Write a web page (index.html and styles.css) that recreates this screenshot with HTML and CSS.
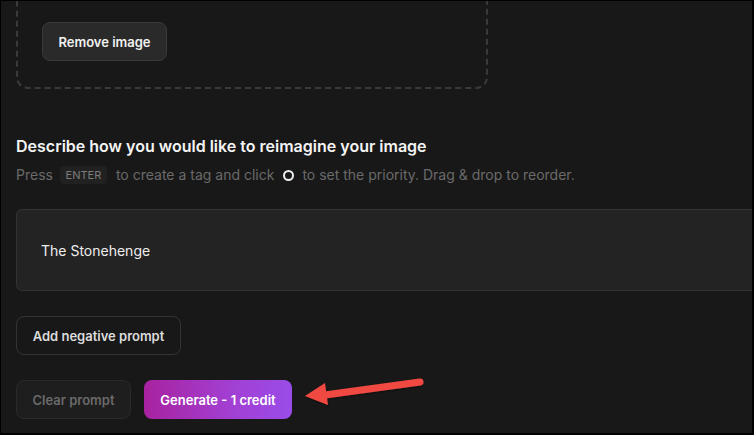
FILE: index.html
```html
<!DOCTYPE html>
<html>
<head>
<meta charset="utf-8">
<link rel="stylesheet" href="styles.css">
</head>
<body>
<div class="frame">
  <div class="content">
    <div class="dropzone">
      <button class="btn btn-dark">Remove image</button>
    </div>
    <h2 class="title">Describe how you would like to reimagine your image</h2>
    <p class="hint">Press <span class="kbd">ENTER</span> to create a tag and click <span class="ring"></span> to set the priority. Drag &amp; drop to reorder.</p>
    <div class="prompt">The Stonehenge</div>
    <div class="row">
      <button class="btn btn-outline">Add negative prompt</button>
    </div>
    <div class="row actions">
      <button class="btn btn-disabled">Clear prompt</button>
      <button class="btn btn-primary">Generate - 1 credit</button>
    </div>
  </div>
  <svg class="arrow" width="140" height="40" viewBox="0 0 140 40">
    <defs>
      <filter id="sh" x="-20%" y="-50%" width="140%" height="200%">
        <feDropShadow dx="0" dy="1" stdDeviation="1" flood-color="#000" flood-opacity="0.5"/>
      </filter>
    </defs>
    <g filter="url(#sh)">
      <line x1="120" y1="8" x2="25" y2="21" stroke="#f04a43" stroke-width="7" stroke-linecap="round"/>
      <polygon points="5,22 25,9 28,31" fill="#f04a43"/>
    </g>
  </svg>
</div>
</body>
</html>
```

FILE: styles.css
```css
html, body {
  margin: 0;
  padding: 0;
  background: #000;
}
.frame {
  position: relative;
  width: 754px;
  height: 435px;
  box-sizing: border-box;
  border-style: solid;
  border-color: #000;
  border-width: 1px 2px 2px 1px;
  background: #181818;
  overflow: hidden;
  font-family: Inter, "Noto Sans", sans-serif;
}
.content {
  padding: 0 0 0 15px;
  width: 900px;
}
.dropzone {
  margin-top: -60px;
  width: 472px;
  height: 148px;
  box-sizing: border-box;
  border: 2px dashed #3a3a3a;
  border-radius: 12px;
  padding: 79px 0 0 24px;
}
.btn {
  font-family: Inter, "Noto Sans", sans-serif;
  font-size: 13px;
  font-weight: 600;
  height: 39px;
  box-sizing: border-box;
  border-radius: 8px;
  padding: 0;
  border: 1px solid #333;
  cursor: pointer;
  white-space: nowrap;
}
.btn-dark {
  width: 125px;
  background: #2a2a2a;
  color: #f2f2f2;
  border-color: #3a3a3a;
}
.title {
  margin: 46px 0 0 0;
  font-size: 16px;
  font-weight: 600;
  color: #f4f4f4;
  line-height: 22px;
  white-space: nowrap;
}
.hint {
  margin: 8px 0 0 0;
  font-size: 14px;
  color: #6a6a6a;
  line-height: 20px;
  display: flex;
  align-items: center;
  white-space: nowrap;
}
.kbd {
  display: inline-flex;
  align-items: center;
  justify-content: center;
  width: 47px;
  height: 18px;
  background: #212121;
  color: #7c7c7c;
  font-size: 11px;
  border-radius: 4px;
  margin: 0 9px 0 7px;
}
.ring {
  display: inline-block;
  width: 7px;
  height: 7px;
  border: 2.5px solid #eee;
  border-radius: 50%;
  margin: 0 8px 0 9px;
}
.prompt {
  margin-top: 24px;
  height: 82px;
  box-sizing: border-box;
  background: #232323;
  border: 1px solid #333;
  border-radius: 6px;
  padding: 0 24px;
  display: flex;
  align-items: center;
  font-size: 14px;
  color: #eeeeee;
}
.row {
  display: flex;
  gap: 13px;
  margin-top: 25px;
}
.btn-outline {
  width: 165px;
  background: transparent;
  color: #dcdcdc;
  border-color: #333;
}
.btn-disabled {
  width: 115px;
  background: #1e1e1e;
  border-color: #2a2a2a;
  color: #6a6a6a;
}
.btn-primary {
  width: 148px;
  border: none;
  color: #fff;
  background: linear-gradient(90deg, #a8229f 0%, #a240d4 60%, #9a4ce8 100%);
}
.arrow {
  position: absolute;
  left: 299px;
  top: 373px;
}
```
